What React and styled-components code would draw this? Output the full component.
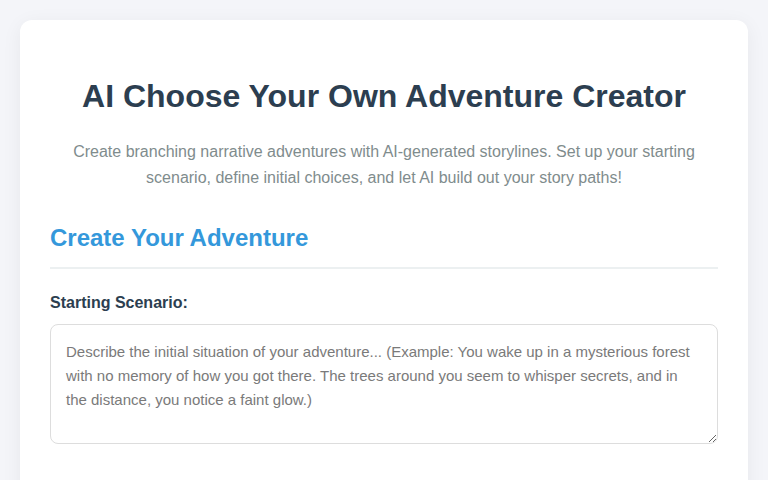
import React from 'react';
import styled, { createGlobalStyle } from 'styled-components';

const GlobalStyle = createGlobalStyle`
  * { box-sizing: border-box; }
  body {
    margin: 0;
    padding: 20px;
    background: #f4f5f9;
    font-family: "Liberation Sans", Arial, sans-serif;
    color: #2c3e50;
    line-height: 1.6;
  }
`;

const Card = styled.div`
  background: #fff;
  border-radius: 12px;
  box-shadow: 0 4px 20px rgba(0, 0, 0, 0.06);
  padding: 30px;
  min-height: 600px;
`;

const Header = styled.header`
  text-align: center;
  padding-top: 27px;
  margin-bottom: 28px;
`;

const Title = styled.h1`
  font-size: 32px;
  font-weight: 700;
  color: #2c3e50;
  margin: 0 0 24px;
  line-height: 1.2;
`;

const Subtitle = styled.p`
  font-size: 16px;
  color: #7f8c8d;
  max-width: 640px;
  margin: 0 auto;
`;

const SectionTitle = styled.h2`
  font-size: 24px;
  font-weight: 700;
  color: #3498db;
  margin: 0 0 21px;
  padding-bottom: 10px;
  border-bottom: 2px solid #ecf0f1;
  line-height: 1.6;
`;

const Label = styled.label`
  display: block;
  font-weight: 700;
  font-size: 16px;
  margin-bottom: 8px;
  color: #2c3e50;
`;

const TextArea = styled.textarea`
  display: block;
  width: 100%;
  height: 120px;
  padding: 15px;
  border: 1px solid #ddd;
  border-radius: 8px;
  font-family: "Liberation Sans", Arial, sans-serif;
  font-size: 15px;
  line-height: 1.6;
  color: #2c3e50;
  resize: vertical;
  &::placeholder { color: #7a7a7a; }
`;

export default function App() {
  return (
    <>
      <GlobalStyle />
      <Card>
        <Header>
          <Title>AI Choose Your Own Adventure Creator</Title>
          <Subtitle>
            Create branching narrative adventures with AI-generated storylines. Set up your starting scenario, define initial choices, and let AI build out your story paths!
          </Subtitle>
        </Header>
        <SectionTitle>Create Your Adventure</SectionTitle>
        <Label>Starting Scenario:</Label>
        <TextArea placeholder="Describe the initial situation of your adventure... (Example: You wake up in a mysterious forest with no memory of how you got there. The trees around you seem to whisper secrets, and in the distance, you notice a faint glow.)" />
      </Card>
    </>
  );
}
